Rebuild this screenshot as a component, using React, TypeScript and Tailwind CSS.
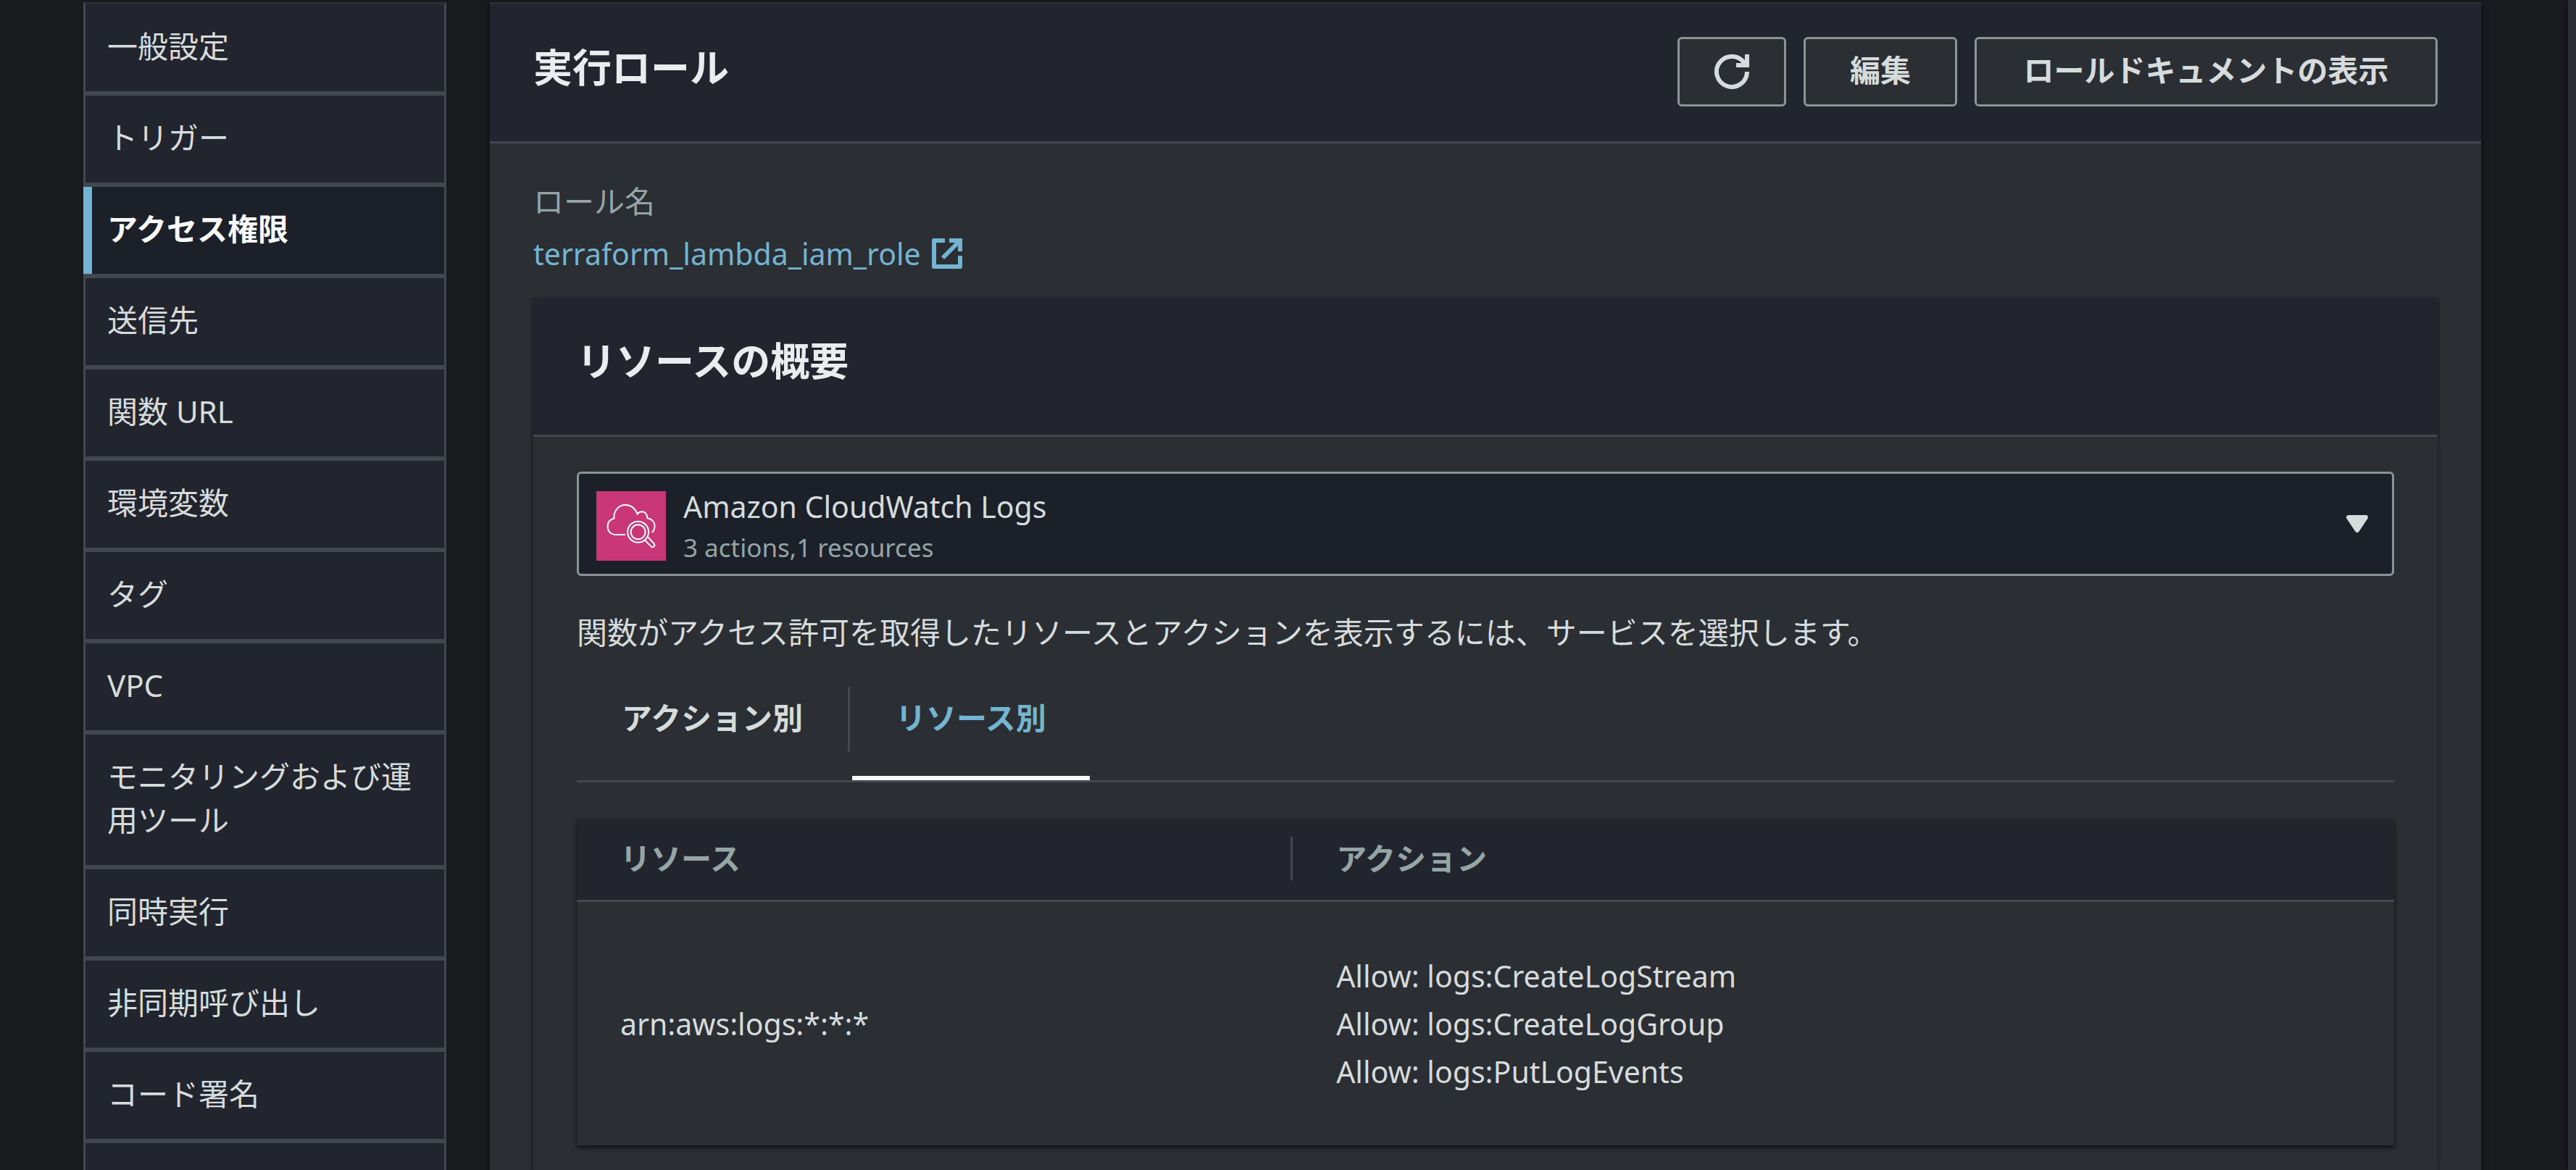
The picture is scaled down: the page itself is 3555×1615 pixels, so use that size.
import type { ReactNode } from "react";
import clsx from "clsx";

interface NavItem {
  label: string;
  active?: boolean;
}

const navItems: NavItem[] = [
  { label: "一般設定" },
  { label: "トリガー" },
  { label: "アクセス権限", active: true },
  { label: "送信先" },
  { label: "関数 URL" },
  { label: "環境変数" },
  { label: "タグ" },
  { label: "VPC" },
  { label: "モニタリングおよび運用ツール" },
  { label: "同時実行" },
  { label: "非同期呼び出し" },
  { label: "コード署名" },
];

const permissions = [
  {
    resource: "arn:aws:logs:*:*:*",
    actions: [
      "Allow: logs:CreateLogStream",
      "Allow: logs:CreateLogGroup",
      "Allow: logs:PutLogEvents",
    ],
  },
];

function RefreshIcon() {
  return (
    <svg viewBox="0 0 16 16" className="size-12" fill="none" stroke="currentColor" strokeWidth="2">
      <path d="M15 8a7 7 0 1 1-1.1-3.8l.6.8" />
      <path d="M15 0v5h-5" />
    </svg>
  );
}

function ExternalIcon() {
  return (
    <svg viewBox="0 0 16 16" className="size-12" fill="none" stroke="currentColor" strokeWidth="2">
      <path d="M14 9v5H2V2h5" strokeLinejoin="round" />
      <path d="M9 2h5v5" />
      <path d="m6 10 8-8" />
    </svg>
  );
}

function CaretIcon() {
  return (
    <svg
      viewBox="0 0 16 16"
      className="size-12 shrink-0"
      fill="currentColor"
      stroke="currentColor"
      strokeWidth="2"
      strokeLinejoin="round"
    >
      <path d="M4 5h8l-4 6z" />
    </svg>
  );
}

function CloudWatchIcon() {
  return (
    <svg
      viewBox="0 0 96 96"
      className="size-24 shrink-0 bg-[#c93778]"
      fill="none"
      stroke="#fff"
      strokeWidth="2"
    >
      <path d="M40 60H27c-7 0-11.400-4.500-11.400-11.500C15.600 43 19 39 24.500 37.500C23.500 27 31 19 40 19c8 0 13.500 5 16.700 12.500C58.500 29 60 28.300 62.500 28.300c5 0 7.500 3.500 8 9c6 1.200 10 5 10 11c0 3.500-1.200 6.500-3.800 8.700" />
      <circle cx="57.6" cy="56.3" r="14.5" />
      <circle cx="57.6" cy="56.3" r="10" />
      <path d="m67 67.5 8.300 8.600c2.800 2.800 6.500-.8 4.300-3.600L71.500 63.500" />
    </svg>
  );
}

function Button({
  children,
  className,
  label,
}: {
  children: ReactNode;
  className?: string;
  label?: string;
}) {
  return (
    <button
      type="button"
      aria-label={label}
      className={clsx(
        "flex h-24 items-center justify-center rounded-md border-3 border-[#8a9596] bg-[#2b2e33] font-bold text-[#d6dbdb]",
        className,
      )}
    >
      {children}
    </button>
  );
}

function Panel({
  title,
  actions,
  children,
  className,
}: {
  title: string;
  actions?: ReactNode;
  children: ReactNode;
  className?: string;
}) {
  return (
    <section
      className={clsx(
        "flex grow flex-col bg-[#2b2e33] shadow-[0_3px_6px_rgba(0,0,0,0.6)]",
        className,
      )}
    >
      <header className="flex h-48 items-start justify-between border-b-3 border-[#434750] bg-[#22252d] px-[60px] pt-[45px]">
        <h2 className="text-[54px] leading-[84px] font-bold text-[#eaeded]">{title}</h2>
        {actions && <div className="flex gap-6">{actions}</div>}
      </header>
      <div className="flex grow flex-col px-[60px] pt-12">{children}</div>
    </section>
  );
}

export default function App() {
  return (
    <div className="flex h-screen min-h-[1615px] overflow-hidden bg-[#191a1e] pt-[3px] pl-[115px] font-['Noto_Sans','Noto_Sans_CJK_JP',sans-serif] text-[42px] leading-[60px] text-[#d6dbdb]">
      <nav className="mr-[60px] flex w-[501px] shrink-0 flex-col border-x-3 border-t-3 border-[#434750] border-t-[#2b2e33] bg-[#22252d]">
        <ul>
          {navItems.map((item) => (
            <li key={item.label} className="border-b-6 border-[#434750]">
              <a
                href="#"
                aria-current={item.active ? "page" : undefined}
                className={clsx(
                  "block pt-7 pr-6 pb-8",
                  item.active
                    ? "-ml-[3px] border-l-12 border-[#73b4d3] bg-[#1c2029] pl-[21px] font-bold text-[#fafafa]"
                    : "pl-[30px]",
                )}
              >
                {item.label}
              </a>
            </li>
          ))}
        </ul>
      </nav>

      <main className="flex min-w-0 grow flex-col">
        <Panel
          title="実行ロール"
          className="border-t-3 border-[#2b2e33]"
          actions={
            <>
              <Button label="更新" className="w-[150px]">
                <RefreshIcon />
              </Button>
              <Button className="min-w-[212px] pb-1">編集</Button>
              <Button className="min-w-[639px] pb-1">ロールドキュメントの表示</Button>
            </>
          }
        >
          <dl className="mb-[31px] pt-[2px]">
            <dt className="text-[#95a5a6]">ロール名</dt>
            <dd className="mt-3">
              <a href="#" className="inline-flex items-center gap-3 text-[41px] text-[#73b4d3]">
                terraform_lambda_iam_role
                <ExternalIcon />
              </a>
            </dd>
          </dl>

          <Panel title="リソースの概要">
            <button
              type="button"
              aria-haspopup="listbox"
              className="flex h-36 w-full items-center rounded-md border-3 border-[#8a9596] bg-[#1c2029] px-6 text-left"
            >
              <span className="flex min-w-0 grow items-center gap-6 pt-1.5">
                <CloudWatchIcon />
                <span>
                  <span className="block text-[41px]">Amazon CloudWatch Logs</span>
                  <span className="block text-[35px] leading-[54px] text-[#95a5a6]">
                    3 actions,1 resources
                  </span>
                </span>
              </span>
              <CaretIcon />
            </button>
            <p className="mt-12">
              関数がアクセス許可を取得したリソースとアクションを表示するには、サービスを選択します。
            </p>

            <div role="tablist" className="mt-[45px] flex border-b-3 border-[#434750] font-bold">
              <div className="mr-[3px] h-[90px] border-r-3 border-[#434750]">
                <button
                  type="button"
                  role="tab"
                  aria-selected={false}
                  className="h-[90px] px-[62px] pb-1"
                >
                  アクション別
                </button>
              </div>
              <button
                type="button"
                role="tab"
                aria-selected
                className="h-[129px] border-b-6 border-[#fafafa] px-[60px] pb-[37px] text-[#73b4d3]"
              >
                リソース別
              </button>
            </div>

            <table className="mt-[51px] w-full table-fixed border-collapse text-left shadow-[0_3px_6px_rgba(0,0,0,0.7)]">
              <thead className="bg-[#22252d] text-[#95a5a6]">
                <tr className="border-b-3 border-[#434750]">
                  <th scope="col" className="w-[39.4%] pt-6 pb-[27px] font-bold">
                    <div className="border-r-3 border-[#434750] px-[60px]">リソース</div>
                  </th>
                  <th scope="col" className="px-[60px] pt-6 pb-[27px] font-bold">
                    アクション
                  </th>
                </tr>
              </thead>
              <tbody className="text-[41px]">
                {permissions.map((row) => (
                  <tr key={row.resource}>
                    <td className="px-[60px]">{row.resource}</td>
                    <td className="px-[60px] py-[69px] leading-[66px]">
                      {row.actions.map((action) => (
                        <div key={action}>{action}</div>
                      ))}
                    </td>
                  </tr>
                ))}
              </tbody>
            </table>
          </Panel>
        </Panel>
      </main>

      {/* edge of the collapsed help panel */}
      <aside className="-mt-[3px] ml-[120px] w-[11px] shrink-0 bg-[#2b2e33] shadow-[0_0_6px_rgba(0,0,0,0.6)]" />
    </div>
  );
}
